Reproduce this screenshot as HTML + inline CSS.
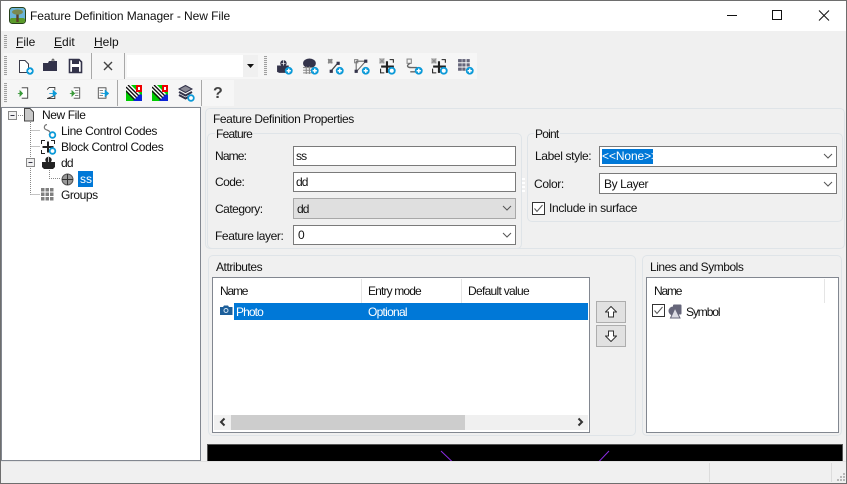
<!DOCTYPE html>
<html><head><meta charset="utf-8"><style>
html,body{margin:0;padding:0;background:#f0f0f0}
#w{position:relative;width:847px;height:484px;overflow:hidden;background:#f0f0f0;font:12px "Liberation Sans",sans-serif;color:#111}
#w div,#w svg,#w span.a{position:absolute}
.t{white-space:nowrap;line-height:14px}
.p{border:1px solid #dfe4e8;border-radius:5px;box-sizing:border-box}
.i{box-sizing:border-box;border:1px solid #7a7a7a;background:#fff;height:20px}
u{text-decoration:underline}
.grip{width:3px;background:repeating-linear-gradient(#a0a0a0 0 1px,#f0f0f0 1px 2px)}
</style></head><body><div id="w">
<svg width="0" height="0" style="position:absolute"><defs>
<g id="plus"><circle cx="12" cy="12" r="3.7" fill="#0c9ad8"/><path d="M10 12h4M12 10v4" stroke="#fff" stroke-width="1.4"/></g>
<g id="star"><circle cx="12" cy="12" r="3.7" fill="#0c9ad8"/><circle cx="12" cy="12" r="1.9" fill="#fff"/></g>
<g id="cross"><path d="M.5 4V.5H4M10 .5H13.500V4M.5 10V13.500H4M10 13.500H13.500V10" stroke="#222" fill="none"/><path d="M7 1.500V12.500M1.500 7H12.500" stroke="#222" stroke-width="2"/></g>
<g id="cross2"><path d="M10 1.500H13.500V4.500M1.500 10V14H5M10 14H13.500" stroke="#222" fill="none"/><path d="M7.500 3V14M2 8H14" stroke="#222" stroke-width="2"/><path d="M.5 .5L5 5M5 .5L.5 5" stroke="#888"/><rect x="1" y="1" width="3.500" height="3.500" fill="none" stroke="#999"/></g>
<g id="mix"><rect width="16" height="16" fill="#0c0"/><path d="M0 0L16 16" stroke="#fff" stroke-width="7"/><path d="M0 2L12 14M2 0L14 12M0 6L9 15" stroke="#111" stroke-width="1.400"/><path d="M7 16L14 9L16 10V16Z" fill="#0a22d8"/><rect x="10" y="0" width="6" height="7" fill="#e00"/><rect x="12" y="2" width="2" height="3" fill="#fff"/></g>
</defs></svg>

<!-- title -->
<div style="left:0;top:0;width:847px;height:31px;background:#fff"></div>
<svg style="left:9px;top:7px" width="17" height="17" viewBox="0 0 17 17"><rect x=".5" y=".5" width="16" height="16" rx="3" fill="#6ab4d8" stroke="#26401a"/><rect x="1" y="11" width="15" height="5" rx="2" fill="#5a9a2a"/><path d="M8.500 15V7" stroke="#5a4028" stroke-width="2.400"/><ellipse cx="8.500" cy="5" rx="5.500" ry="2.600" fill="#7a8a50"/></svg>
<div class="t" style="left:30px;top:9px;letter-spacing:-.07px">Feature Definition Manager - New File</div>
<svg style="left:725px;top:8px" width="110" height="16"><path d="M2 7.500H12" stroke="#111"/><rect x="47.500" y="2.500" width="9" height="9" fill="none" stroke="#111"/><path d="M94 2.500L104 12.500M104 2.500L94 12.500" stroke="#111"/></svg>

<!-- menu -->
<div class="grip" style="left:4px;top:35px;height:14px"></div>
<div class="t" style="left:16px;top:35px"><u>F</u>ile</div>
<div class="t" style="left:54px;top:35px"><u>E</u>dit</div>
<div class="t" style="left:94px;top:35px"><u>H</u>elp</div>

<!-- toolbar 1 -->
<div style="left:3px;top:53px;width:474px;height:26px;background:#f6f6f6"></div>
<div class="grip" style="left:4px;top:56px;height:20px"></div>
<svg style="left:18px;top:59px" width="16" height="16" viewBox="0 0 16 16"><path d="M1.500 1.500H7L10.500 5V13.500H1.500Z" fill="#fff" stroke="#3b3b4a"/><use href="#plus"/></svg>
<svg style="left:43px;top:58px" width="15" height="14" viewBox="0 0 15 14"><path d="M0 5H5L6 3H14V13H0Z" fill="#33334a"/><path d="M10 3.500V1M8.500 2.500L10 1L11.500 2.500" stroke="#666" fill="none"/></svg>
<svg style="left:68px;top:58px" width="15" height="16" viewBox="0 0 15 16"><path d="M1.500 1.500H11L13.500 4V14.500H1.500Z" fill="#fff" stroke="#33334a" stroke-width="1.600"/><rect x="4" y="1" width="7" height="5" fill="#33334a"/><rect x="4" y="9" width="7" height="5" fill="#33334a"/></svg>
<div style="left:91px;top:53px;width:1px;height:26px;background:#a8a8a8"></div>
<svg style="left:102px;top:60px" width="12" height="12"><path d="M2 2L10 10M10 2L2 10" stroke="#444" stroke-width="1.400"/></svg>
<div style="left:124px;top:53px;width:1px;height:26px;background:#a8a8a8"></div>
<div style="left:127px;top:55px;width:116px;height:22px;background:#fff"></div>
<div style="left:243px;top:55px;width:15px;height:22px;background:#f0f0f0"></div>
<svg style="left:246px;top:63px" width="10" height="6"><path d="M1 1H8L4.500 5Z" fill="#111"/></svg>
<div class="grip" style="left:264px;top:56px;height:20px"></div>

<svg style="left:276px;top:58px" width="17" height="17" viewBox="0 0 16 16"><path d="M1 7H12V13L10 14H3L1 13Z" fill="#33334a"/><circle cx="7" cy="5" r="3" fill="#33334a"/><path d="M7 2V7M5 5H9" stroke="#fff" stroke-width=".7"/><use href="#plus"/></svg>
<svg style="left:302px;top:58px" width="17" height="17" viewBox="0 0 16 16"><ellipse cx="7" cy="5" rx="6" ry="4.500" fill="#33334a"/><path d="M1 9H10M1 11.500H9M1 14H9M4 8V15M7 8V15" stroke="#888"/><use href="#plus"/></svg>
<svg style="left:327px;top:58px" width="17" height="17" viewBox="0 0 16 16"><path d="M1 1L5 5M5 1L1 5" stroke="#888" stroke-width="1.300"/><rect x="1.500" y="1.500" width="3" height="3" fill="none" stroke="#888" /><path d="M4 12L10 5" stroke="#444" stroke-width="1.200"/><rect x="2.500" y="11" width="3" height="3" fill="#33334a"/><rect x="9" y="3.500" width="3" height="3" fill="#33334a"/><use href="#plus"/></svg>
<svg style="left:353px;top:58px" width="17" height="17" viewBox="0 0 16 16"><rect x="1.500" y="1.500" width="3" height="3" fill="none" stroke="#888"/><path d="M3 3V13L12 3H3" fill="none" stroke="#666"/><rect x="1.500" y="11" width="3" height="3" fill="#33334a"/><rect x="10.500" y="1.500" width="3" height="3" fill="#33334a"/><use href="#plus"/></svg>
<svg style="left:379px;top:58px" width="17" height="17" viewBox="0 0 16 16"><use href="#cross2"/><use href="#star"/></svg>
<svg style="left:406px;top:58px" width="17" height="17" viewBox="0 0 16 16"><rect x="1" y="1" width="4" height="4" fill="none" stroke="#888"/><path d="M4 5C0 7 1 9 5 9H10C13 10 12 13 8 13H4" fill="none" stroke="#666" stroke-width="1.300"/><use href="#plus"/></svg>
<svg style="left:431px;top:58px" width="17" height="17" viewBox="0 0 16 16"><use href="#cross2"/><use href="#star"/></svg>
<svg style="left:457px;top:58px" width="17" height="17" viewBox="0 0 16 16"><g fill="#66667a"><rect x="1" y="1" width="3.500" height="3"/><rect x="5" y="1" width="3" height="3"/><rect x="9" y="1" width="3" height="3"/><rect x="1" y="5" width="3.500" height="3"/><rect x="5" y="5" width="3" height="3"/><rect x="9" y="5" width="3" height="3"/><rect x="1" y="9" width="3.500" height="3"/><rect x="5" y="9" width="3" height="3"/><rect x="9" y="9" width="3" height="3"/></g><use href="#plus"/></svg>

<!-- toolbar 2 -->
<div style="left:3px;top:80px;width:231px;height:26px;background:#f6f6f6"></div>
<div class="grip" style="left:4px;top:83px;height:20px"></div>
<svg style="left:17px;top:86px" width="12" height="14" viewBox="0 0 14 16"><path d="M5.500 2H12.500V14H5.500" fill="#fff" stroke="#333"/><path d="M1 8.500H5M6.500 8.500L3.500 5.500V11.500Z" fill="#3a9a3a" stroke="#3a9a3a"/></svg>
<svg style="left:45px;top:86px" width="12" height="14" viewBox="0 0 14 16"><path d="M2.500 4L5 1.500H11.500V5M11.500 11V14.500H2.500Z" fill="#fff" stroke="#333"/><path d="M5 8.500H10M13.500 8.500L9.500 5V12Z" fill="#0c9ad8" stroke="#0c9ad8"/></svg>
<svg style="left:69px;top:86px" width="12" height="14" viewBox="0 0 14 16"><path d="M5.500 2H12.500V14H5.500" fill="#fff" stroke="#444"/><path d="M7 5H11M7 8H11M7 11H11" stroke="#777"/><path d="M1 8.500H4M6.500 8.500L3.500 5.500V11.500Z" fill="#3a9a3a" stroke="#3a9a3a"/></svg>
<svg style="left:97px;top:86px" width="12" height="14" viewBox="0 0 14 16"><path d="M1.500 2H10.500V14H1.500Z" fill="#fff" stroke="#444"/><path d="M3 5H7M3 8H7M3 11H7" stroke="#777"/><path d="M5 8.500H10M13.500 8.500L9.500 5V12Z" fill="#0c9ad8" stroke="#0c9ad8"/></svg>
<div style="left:117px;top:80px;width:1px;height:26px;background:#a8a8a8"></div>
<svg style="left:126px;top:85px" width="16" height="16"><use href="#mix"/></svg>
<svg style="left:152px;top:85px" width="16" height="16"><use href="#mix"/></svg>
<svg style="left:178px;top:84px" width="17" height="18" viewBox="0 0 17 18"><path d="M1 5L7.500 1.500L14 5L7.500 8.500Z" fill="#8a8a96" stroke="#33334a"/><path d="M1 8L7.500 11.500L14 8M1 11L7.500 14.500L12 12" fill="none" stroke="#33334a" stroke-width="2"/><g transform="translate(1,2)"><use href="#star"/></g></svg>
<div style="left:201px;top:80px;width:1px;height:26px;background:#a8a8a8"></div>
<div class="t" style="left:213px;top:85px;font-size:16px;line-height:18px;font-weight:bold;color:#444">?</div>

<!-- tree -->
<div style="left:1px;top:107px;width:200px;height:354px;box-sizing:border-box;background:#fff;border:1px solid #828790"></div>
<svg style="left:3px;top:108px" width="60" height="100"><g fill="none" stroke="#888" stroke-dasharray="1 1"><path d="M13 7.500H21M27.500 14V86.500M27.500 22.500H37M27.500 38.500H37M27.500 86.500H37M46.500 62V70.500H57"/></g>
<rect x="5.500" y="3.500" width="8" height="8" fill="#f0f0f0" stroke="#888"/><path d="M7.500 7.500h4" stroke="#334"/>
<rect x="23.500" y="50.500" width="8" height="8" fill="#f0f0f0" stroke="#888"/><path d="M25.500 54.500h4" stroke="#334"/></svg>
<svg style="left:23px;top:107px" width="12" height="15"><path d="M1.500 1.500H7L10.500 5V14H1.500Z" fill="#c9c9c9" stroke="#444"/></svg>
<div class="t" style="left:42px;top:108px;letter-spacing:-.4px">New File</div>
<svg style="left:41px;top:124px" width="16" height="16"><path d="M6 6C2 5 3 1 6 .5M6 6C9 7 10 9 8 11" fill="none" stroke="#777" stroke-width="1.200"/><g transform="translate(-.5,-1)"><use href="#star"/></g></svg>
<div class="t" style="left:61px;top:124px;letter-spacing:-.37px">Line Control Codes</div>
<svg style="left:41px;top:140px" width="16" height="16"><use href="#cross"/><g transform="translate(-.5,-1)"><use href="#star"/></g></svg>
<div class="t" style="left:61px;top:140px;letter-spacing:-.37px">Block Control Codes</div>
<svg style="left:41px;top:156px" width="15" height="14" viewBox="0 0 15 14"><path d="M1 6H14V11L12 13H3L1 11Z" fill="#222"/><circle cx="7.500" cy="4" r="3.200" fill="#222"/><path d="M7.500 1V6" stroke="#fff" stroke-width=".7"/></svg>
<div class="t" style="left:61px;top:156px;letter-spacing:-.8px">dd</div>
<svg style="left:61px;top:173px" width="13" height="13"><circle cx="6.500" cy="6.500" r="5.500" fill="#999" stroke="#555"/><path d="M6.500 1V12M1 6.500H12" stroke="#333"/></svg>
<div style="left:78px;top:171px;width:15px;height:16px;background:#0078d7"></div>
<div class="t" style="left:80px;top:172px;color:#fff">ss</div>
<svg style="left:41px;top:188px" width="13" height="13"><g fill="#808080"><rect x="0" y="0" width="3.500" height="3.500"/><rect x="4.500" y="0" width="3.500" height="3.500"/><rect x="9" y="0" width="3.500" height="3.500"/><rect x="0" y="4.500" width="3.500" height="3.500"/><rect x="4.500" y="4.500" width="3.500" height="3.500"/><rect x="9" y="4.500" width="3.500" height="3.500"/><rect x="0" y="9" width="3.500" height="3.500"/><rect x="4.500" y="9" width="3.500" height="3.500"/><rect x="9" y="9" width="3.500" height="3.500"/></g></svg>
<div class="t" style="left:61px;top:188px;letter-spacing:-.45px">Groups</div>

<!-- properties -->
<div class="p" style="left:205px;top:108px;width:640px;height:141px"></div>
<div class="t" style="left:213px;top:112px;letter-spacing:-.41px">Feature Definition Properties</div>
<div class="p" style="left:207px;top:133px;width:315px;height:116px"></div>
<div class="t" style="left:215px;top:127px;padding:0 1px;background:#f0f0f0;letter-spacing:-.75px">Feature</div>
<div class="p" style="left:527px;top:133px;width:316px;height:89px"></div>
<div class="t" style="left:534px;top:127px;padding:0 2px 0 1px;background:#f0f0f0;letter-spacing:-.8px">Point</div>
<div class="grip" style="left:522px;top:178px;height:16px;background:repeating-linear-gradient(#fff 0 2px,#f0f0f0 2px 4px)"></div>

<div class="t" style="left:215px;top:149px;letter-spacing:-.85px">Name:</div>
<div class="i" style="left:293px;top:146px;width:223px"></div><div class="t" style="left:296px;top:149px;letter-spacing:-.9px">ss</div>
<div class="t" style="left:215px;top:175px;letter-spacing:-.55px">Code:</div>
<div class="i" style="left:293px;top:172px;width:223px"></div><div class="t" style="left:296px;top:175px;letter-spacing:-.9px">dd</div>
<div class="t" style="left:215px;top:202px;letter-spacing:-.5px">Category:</div>
<div class="i" style="left:293px;top:198px;width:223px;height:21px;background:#dfdfdf;border-color:#a8a8a8"></div><div class="t" style="left:297px;top:202px;letter-spacing:-.9px">dd</div>
<div class="t" style="left:215px;top:229px;letter-spacing:-.4px">Feature layer:</div>
<div class="i" style="left:293px;top:225px;width:223px"></div><div class="t" style="left:298px;top:228px">0</div>
<svg style="left:501px;top:204px" width="12" height="8"><path d="M2 2L6 6L10 2" stroke="#555" fill="none"/></svg>
<svg style="left:501px;top:231px" width="12" height="8"><path d="M2 2L6 6L10 2" stroke="#555" fill="none"/></svg>

<div class="t" style="left:535px;top:149px;letter-spacing:-.37px">Label style:</div>
<div class="i" style="left:599px;top:146px;width:238px;height:21px"></div>
<div style="left:602px;top:149px;width:51px;height:15px;background:#0078d7"></div><div class="t" style="left:602px;top:149px;color:#fff;letter-spacing:-.1px">&lt;&lt;None&gt;&gt;</div>
<div class="t" style="left:534px;top:177px;letter-spacing:-.35px">Color:</div>
<div class="i" style="left:599px;top:173px;width:238px;height:21px"></div><div class="t" style="left:604px;top:177px;letter-spacing:-.4px">By Layer</div>
<svg style="left:822px;top:152px" width="12" height="8"><path d="M2 2L6 6L10 2" stroke="#555" fill="none"/></svg>
<svg style="left:822px;top:180px" width="12" height="8"><path d="M2 2L6 6L10 2" stroke="#555" fill="none"/></svg>
<svg style="left:532px;top:202px" width="14" height="14"><rect x=".5" y=".5" width="12" height="12" fill="#fff" stroke="#333"/><path d="M2.500 6.500L5 9.500L10.500 3" fill="none" stroke="#555"/></svg>
<div class="t" style="left:549px;top:201px;letter-spacing:-.33px">Include in surface</div>

<!-- attributes -->
<div class="p" style="left:208px;top:255px;width:428px;height:181px"></div>
<div class="t" style="left:216px;top:260px;letter-spacing:-.45px">Attributes</div>
<div style="left:212px;top:277px;width:378px;height:156px;box-sizing:border-box;background:#fff;border:1px solid #828790"></div>
<div style="left:361px;top:279px;width:1px;height:24px;background:#e5e5e5"></div>
<div style="left:461px;top:279px;width:1px;height:24px;background:#e5e5e5"></div>
<div class="t" style="left:220px;top:284px;letter-spacing:-1.2px">Name</div>
<div class="t" style="left:368px;top:284px;letter-spacing:-.85px">Entry mode</div>
<div class="t" style="left:468px;top:284px;letter-spacing:-.7px">Default value</div>
<div style="left:234px;top:303px;width:354px;height:17px;background:#0078d7"></div>
<svg style="left:220px;top:305px" width="13" height="11"><path d="M0 2H3L4 0.500H8L9 2H12.500V10H0Z" fill="#1d5f9a"/><circle cx="6" cy="5.500" r="2.500" fill="#cfe2f2"/><circle cx="6" cy="5.500" r="1.500" fill="#1d5f9a"/></svg>
<div class="t" style="left:236px;top:305px;color:#fff;letter-spacing:-.9px">Photo</div>
<div class="t" style="left:368px;top:305px;color:#fff;letter-spacing:-.73px">Optional</div>
<div style="left:214px;top:415px;width:374px;height:15px;background:#f0f0f0"></div>
<div style="left:231px;top:415px;width:234px;height:15px;background:#cdcdcd"></div>
<svg style="left:218px;top:417px" width="10" height="10"><path d="M6.500 1.500L3 5L6.500 8.500" fill="none" stroke="#333" stroke-width="2"/></svg>
<svg style="left:575px;top:417px" width="10" height="10"><path d="M3.500 1.500L7 5L3.500 8.500" fill="none" stroke="#333" stroke-width="2"/></svg>
<div style="left:596px;top:301px;width:30px;height:22px;box-sizing:border-box;background:#e1e1e1;border:1px solid #adadad"></div>
<div style="left:596px;top:325px;width:30px;height:22px;box-sizing:border-box;background:#e1e1e1;border:1px solid #adadad"></div>
<svg style="left:605px;top:306px" width="12" height="12"><path d="M6 .5L11.500 6H8.500V11H3.500V6H.5Z" fill="#fff" stroke="#333"/></svg>
<svg style="left:605px;top:330px" width="12" height="12"><path d="M6 11.500L11.500 6H8.500V1H3.500V6H.5Z" fill="#fff" stroke="#333"/></svg>

<!-- lines -->
<div class="p" style="left:642px;top:255px;width:200px;height:181px"></div>
<div class="t" style="left:650px;top:260px;letter-spacing:-.47px">Lines and Symbols</div>
<div style="left:646px;top:277px;width:193px;height:156px;box-sizing:border-box;background:#fff;border:1px solid #828790"></div>
<div style="left:824px;top:279px;width:1px;height:24px;background:#e5e5e5"></div>
<div class="t" style="left:654px;top:284px;letter-spacing:-1.2px">Name</div>
<svg style="left:652px;top:304px" width="14" height="14"><rect x=".5" y=".5" width="12" height="12" fill="#fff" stroke="#333"/><path d="M2.500 6.500L5 9.500L10.500 3" fill="none" stroke="#555"/></svg>
<svg style="left:668px;top:304px" width="15" height="15"><circle cx="5" cy="7" r="4.500" fill="#66667a"/><rect x="5" y="0.500" width="8.500" height="10" rx="1" fill="#66667a"/><path d="M7 4L2.500 14H12Z" fill="#dcdce4" stroke="#66667a"/></svg>
<div class="t" style="left:686px;top:305px;letter-spacing:-1.1px">Symbol</div>

<!-- black preview -->
<div style="left:207px;top:444px;width:636px;height:17px;background:#000;box-sizing:border-box;border:1px solid #555;border-bottom:0"></div>
<svg style="left:207px;top:444px" width="636" height="17"><path d="M234 7L245 17.500M402 7L392 17.500" stroke="#8a2be2" fill="none"/></svg>

<!-- status -->
<div style="left:0;top:461px;width:847px;height:22px;background:#f0f0f0;border-top:1px solid #e2e2e2;box-sizing:border-box"></div>
<div style="left:709px;top:463px;width:1px;height:19px;background:#dcdcdc"></div>
<div style="left:831px;top:463px;width:1px;height:19px;background:#dcdcdc"></div>
<svg style="left:835px;top:472px" width="11" height="11"><g fill="#b8b8b8"><rect x="8" y="1" width="2" height="2"/><rect x="5" y="4" width="2" height="2"/><rect x="8" y="4" width="2" height="2"/><rect x="2" y="7" width="2" height="2"/><rect x="5" y="7" width="2" height="2"/><rect x="8" y="7" width="2" height="2"/></g></svg>

<!-- window border -->
<div style="left:0;top:0;width:847px;height:484px;box-sizing:border-box;border:1px solid #6e6e6e;pointer-events:none"></div>
</div></body></html>
